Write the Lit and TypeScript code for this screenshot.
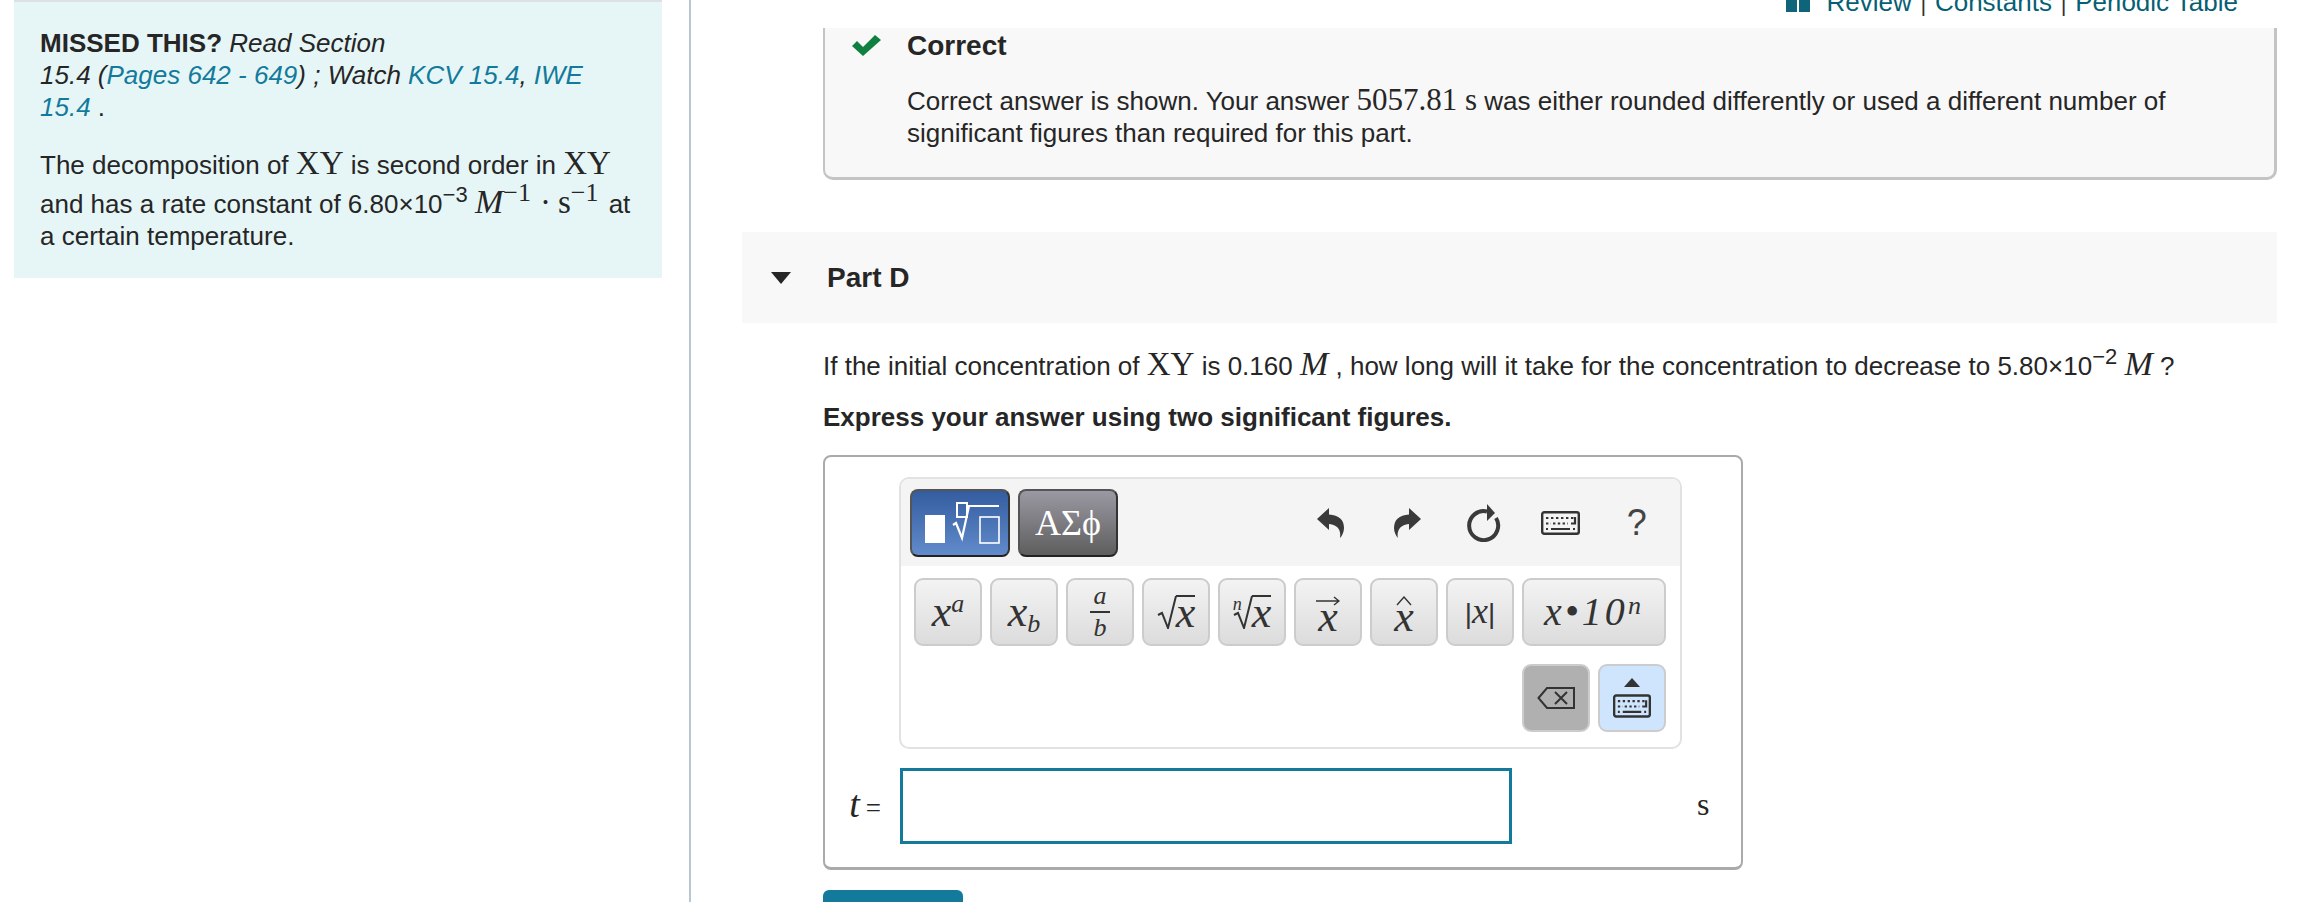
import { LitElement, html, css, svg } from "lit";
import { customElement } from "lit/decorators.js";

const kbd = (w: number, h: number) => html`<svg width=${w} height=${h} viewBox="0 0 39 24" fill="none">
  <rect x="1.2" y="1.2" width="36.6" height="21.6" rx="2" stroke="#333" stroke-width="2.4"/>
  <path d="M5 7H33" stroke="#333" stroke-width="2.2" stroke-dasharray="2.4 2.6"/>
  <path d="M5 12.5H10M12 12.5H27" stroke="#333" stroke-width="2.2" stroke-dasharray="2.4 2.4"/>
  <path d="M30 12.5H34V6" stroke="#333" stroke-width="2.2"/>
  <path d="M5 18H7M10 18H29M32 18H34" stroke="#333" stroke-width="2.2"/>
</svg>`;

const undoPath = svg`<path d="M0 12 12 1V7.5C22 8 27 13 27 21 27 25 25 29 23 31 24 26 23 18 12 17V23Z" fill="#3a3a3a"/>`;
const radical = svg`<path d="M1 20 5 18 11 33 19 1" stroke="#333" stroke-width="2"/>`;

@customElement("app-root")
export class AppRoot extends LitElement {
  static styles = css`
    :host {
      display: flex;
      width: 2312px;
      height: 902px;
      overflow: hidden;
      background: #fff;
      color: #262626;
      font: 26px/32px "Liberation Sans", Arial, sans-serif;
    }
    .left { flex: none; padding-left: 14px; box-sizing: border-box; border-right: 2px solid #bcc6d0; width: 691px; }
    .panel {
      width: 648px; height: 278px; box-sizing: border-box;
      background: #e6f6f7; border-top: 2px solid #dde1e4;
      padding: 25px 0 0 26px;
    }
    .panel .gap { height: 26px; }
    .panel .tall { margin-top: 7px; }
    a { color: #137a9b; text-decoration: none; }
    em { font-style: italic; }
    b { font-weight: 700; }
    .title { font-size: 28px; }
    .m { font-family: "Liberation Serif", "Times New Roman", serif; font-size: 33px; line-height: 0; }
    .mi { font-style: italic; font-size: 34px; }
    sup { font-size: 22px; line-height: 0; vertical-align: 11px; }
    .m sup { font-size: 26px; vertical-align: 12px; font-style: normal; }
    .dot { margin: 0 7px 0 9px; }
    .after { margin-left: 3px; }
    .right { flex: 1; min-width: 0; }
    .tools {
      display: flex; justify-content: flex-end; align-items: center; gap: 16px;
      height: 32px; margin-top: -13px; padding-right: 74px; color: #333;
    }
    .tools a { color: #075f74; }
    .tools svg { margin-top: -6px; }
    .tools small { font-size: 22px; margin: 0 1.5px; }
    .card {
      display: grid; grid-template-columns: 82px 1fr;
      margin: 9px 35px 0 132px; padding: 2px 0 29px; height: 152px;
      box-sizing: border-box; background: #f8f8f8;
      border-left: 2px solid #c4c4c4; border-right: 3px solid #c4c4c4; border-bottom: 3px solid #c4c4c4;
      border-radius: 0 0 10px 10px;
    }
    .check { margin: 5px 0 0 27px; }
    .msg { margin-top: 23px; }
    .part {
      display: flex; align-items: center; gap: 36px;
      margin: 52px 35px 0 51px; height: 91px; padding-left: 29px; background: #f8f8f8;
    }
    .tri { width: 0; height: 0; border: 10px solid transparent; border-top: 12px solid #262626; border-bottom: 0; }
    .body { padding-left: 132px; }
    .q { margin-top: 27px; }
    .ex { margin-top: 19px; }
    .box {
      width: 920px; height: 415px; box-sizing: border-box; margin-top: 22px;
      border: 2px solid #aaa; border-bottom-width: 3px; border-radius: 8px;
      padding: 20px 0 0 74px;
    }
    .editor {
      width: 783px; height: 272px; box-sizing: border-box;
      border: 2px solid #e2e2e2; border-radius: 10px; overflow: hidden;
    }
    .head {
      display: flex; align-items: center; height: 87px; box-sizing: border-box;
      padding: 0 5px 0 9px; background: #f4f4f4; gap: 8px;
    }
    .tab {
      width: 100px; height: 68px; box-sizing: border-box; border-radius: 8px;
      border: 2px solid #555; border-bottom-color: #222; border-right-color: #333;
      display: flex; align-items: center; justify-content: center; color: #fff;
    }
    .tab.blue { background: linear-gradient(#335d9f, #628bcb); }
    .tab.gray { background: linear-gradient(#9a99a3, #5e5e5e); font-family: "Liberation Serif", serif; font-size: 36px; }
    .spacer { flex: 1; }
    .actions { display: flex; }
    .tool { width: 76.5px; display: flex; justify-content: center; align-items: center; }
    .tool.q2 { font-size: 36px; color: #444; line-height: 40px; }
    .keys { display: flex; gap: 8px; padding: 12px 14px 0 13px; }
    .keys.r2 { justify-content: flex-end; padding-top: 18px; }
    .key {
      width: 68px; height: 68px; box-sizing: border-box; flex: none;
      border: 2px solid #ccc; border-radius: 9px; background: linear-gradient(#f3f3f3, #dcdcdc);
      display: flex; align-items: center; justify-content: center;
      font: italic 44px/38px "Liberation Serif", serif; color: #333;
    }
    .key.wide { width: 144px; }
    .key.back { background: #b0b0b0; }
    .key.kb { background: #cfe5fd; flex-direction: column; gap: 7px; }
    .key sup { font-size: 26px; vertical-align: 14px; }
    .key sub { font-size: 26px; line-height: 0; vertical-align: -6px; }
    .frac { display: flex; flex-direction: column; align-items: center; font-size: 26px; line-height: 26px; }
    .frac i { display: block; width: 20px; height: 2px; background: #333; margin: 2px 0; }
    .rad { display: inline-flex; align-items: flex-start; }
    .rad span { border-top: 2px solid #333; line-height: 32px; height: 32px; margin-left: -1px; }
    .rad small { font-size: 18px; line-height: 18px; margin-right: -9px; }
    .stack { display: flex; flex-direction: column; align-items: center; line-height: 30px; margin-top: 4px; }
    .stack svg { margin-bottom: -4px; }
    .abs { font-size: 36px; }
    .abs s { text-decoration: none; font-style: normal; font-family: "Liberation Sans", sans-serif; font-size: 28px; }
    .key.sci { font-size: 40px; letter-spacing: 3px; }
    .key.sci sup { vertical-align: 11px; }
    .ansrow { display: flex; align-items: center; height: 76px; margin: 19px 0 0 -74px; }
    .lab { width: 75px; box-sizing: border-box; padding-right: 19px; text-align: right; white-space: nowrap; font-family: "Liberation Serif", serif; font-size: 27px; }
    .lab i { font-size: 38px; margin-right: 6px; }
    .input { width: 612px; height: 76px; box-sizing: border-box; border: 3px solid #137a9b; background: #fff; }
    .unit { margin: -4px 0 0 185px; font-family: "Liberation Serif", serif; font-size: 32px; }
    .submit { width: 140px; height: 60px; margin-top: 20px; background: #137a9b; border-radius: 6px 6px 0 0; }
  `;

  render() {
    return html`
      <div class="left">
        <div class="panel">
          <div><b>MISSED THIS?</b> <em>Read Section</em></div>
          <div><em>15.4 (<a href="#">Pages 642 - 649</a>) ; Watch <a href="#">KCV 15.4</a>, <a href="#">IWE</a></em></div>
          <div><em><a href="#">15.4</a> </em>.</div>
          <div class="gap"></div>
          <div>The decomposition of <span class="m">XY</span> is second order in <span class="m">XY</span></div>
          <div class="tall">and has a rate constant of 6.80×10<sup>−3</sup> <span class="m"><span class="mi">M</span><sup>−1</sup><span class="dot">·</span>s<sup>−1</sup></span><span class="after"> at</span></div>
          <div>a certain temperature.</div>
        </div>
      </div>
      <div class="right">
        <div class="tools">
          <svg width="24" height="24" viewBox="0 0 24 24"><path d="M0 2H11V24H0ZM13 2H24V24H13Z" fill="#0e6479"/></svg>
          <span><a href="#">Review</a> <small>|</small> <a href="#">Constants</a> <small>|</small> <a href="#">Periodic Table</a></span>
        </div>
        <div class="card">
          <svg class="check" width="29" height="21" viewBox="0 0 29 21"><path d="M0 11 5 6 11 12 23 0 29 5 11 21Z" fill="#0e8040"/></svg>
          <div><b class="title">Correct</b>
            <div class="msg">Correct answer is shown. Your answer <span class="m" style="font-size:31px">5057.81 s</span> was either rounded differently or used a different number of<br>significant figures than required for this part.</div>
          </div>
        </div>
        <div class="part"><div class="tri"></div><b class="title">Part D</b></div>
        <div class="body">
          <div class="q">If the initial concentration of <span class="m">XY</span> is 0.160 <span class="m mi">M</span> , how long will it take for the concentration to decrease to 5.80×10<sup>−2</sup> <span class="m mi">M</span> ?</div>
          <div class="ex"><b>Express your answer using two significant figures.</b></div>
          <div class="box">
            <div class="editor">
              <div class="head">
                <div class="tab blue">
                  <svg width="80" height="44" viewBox="0 0 80 44" fill="none">
                    <rect x="5" y="14" width="20" height="28" fill="#fff"/>
                    <rect x="37" y="2" width="10" height="14" stroke="#fff" stroke-width="2"/>
                    <path d="M33 24 36 22 42 37 49 5H79" stroke="#fff" stroke-width="2.2"/>
                    <rect x="60" y="16" width="19" height="26" stroke="#fff" stroke-width="1.6"/>
                  </svg>
                </div>
                <div class="tab gray">ΑΣϕ</div>
                <div class="spacer"></div>
                <div class="actions">
                  <div class="tool"><svg width="28" height="32" viewBox="0 0 28 32">${undoPath}</svg></div>
                  <div class="tool"><svg width="28" height="32" viewBox="0 0 28 32" style="transform:scaleX(-1)">${undoPath}</svg></div>
                  <div class="tool"><svg width="36" height="38" viewBox="0 0 36 38" fill="none">
                    <path d="M21 7.5A14.5 14.5 0 1 0 30 14" stroke="#3a3a3a" stroke-width="4"/>
                    <path d="M21 0 29 9 21 17Z" fill="#3a3a3a"/></svg></div>
                  <div class="tool">${kbd(39, 24)}</div>
                  <div class="tool q2">?</div>
                </div>
              </div>
              <div class="keys">
                <div class="key"><span>x<sup>a</sup></span></div>
                <div class="key"><span>x<sub>b</sub></span></div>
                <div class="key"><div class="frac"><span>a</span><i></i><span>b</span></div></div>
                <div class="key"><span class="rad"><svg width="20" height="34" viewBox="0 0 20 34" fill="none">${radical}</svg><span>x</span></span></div>
                <div class="key"><span class="rad"><small>n</small><svg width="20" height="34" viewBox="0 0 20 34" fill="none">${radical}</svg><span>x</span></span></div>
                <div class="key"><div class="stack"><svg width="24" height="10" viewBox="0 0 24 10" fill="none"><path d="M0 5H23M18 1 23 5 18 9" stroke="#333" stroke-width="1.4"/></svg><span>x</span></div></div>
                <div class="key"><div class="stack"><svg width="16" height="10" viewBox="0 0 16 10" fill="none"><path d="M1 9 8 1 15 9" stroke="#333" stroke-width="1.4"/></svg><span>x</span></div></div>
                <div class="key abs"><span><s>|</s>x<s>|</s></span></div>
                <div class="key wide sci"><span>x•10<sup>n</sup></span></div>
              </div>
              <div class="keys r2">
                <div class="key back"><svg width="38" height="22" viewBox="0 0 38 22" fill="none">
                  <path d="M1.5 11 10 1H37V21H10Z" stroke="#333" stroke-width="2"/>
                  <path d="M18 5 30 17M30 5 18 17" stroke="#333" stroke-width="2"/></svg></div>
                <div class="key kb"><svg width="16" height="9" viewBox="0 0 16 9"><path d="M0 9 8 0 16 9Z" fill="#333"/></svg>${kbd(38, 24)}</div>
              </div>
            </div>
            <div class="ansrow">
              <div class="lab"><i>t</i>=</div>
              <div class="input"></div>
              <div class="unit">s</div>
            </div>
          </div>
          <div class="submit"></div>
        </div>
      </div>
    `;
  }
}
